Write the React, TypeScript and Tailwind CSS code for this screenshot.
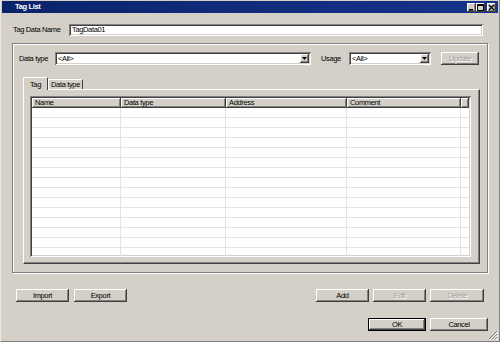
import React from 'react';

const raised =
  'shadow-[inset_-1px_-1px_0_#404040,inset_1px_1px_0_#ffffff,inset_-2px_-2px_0_#808080]';
const sunken =
  'shadow-[inset_1px_1px_0_#808080,inset_-1px_-1px_0_#ffffff,inset_2px_2px_0_#404040,inset_-2px_-2px_0_#d4d0c8]';

function Button({
  label,
  width,
  disabled,
  isDefault,
}: {
  label: string;
  width: string;
  disabled?: boolean;
  isDefault?: boolean;
}) {
  return (
    <div
      className={`${width} h-[13px] flex items-center justify-center bg-[#d4d0c8] ${
        isDefault
          ? 'border border-black shadow-[inset_-1px_-1px_0_#404040,inset_1px_1px_0_#ffffff,inset_-2px_-2px_0_#808080]'
          : raised
      } ${disabled ? 'text-[#a0a0a0] [text-shadow:1px_1px_0_#ffffff]' : 'text-black'}`}
    >
      {label}
    </div>
  );
}

function Combo({ width }: { width: string }) {
  return (
    <div className={`${width} h-[13px] bg-white ${sunken} flex items-center pl-[3px] pr-[2px]`}>
      <span className="flex-1">&lt;All&gt;</span>
      <div className={`w-[9px] h-[9px] bg-[#d4d0c8] ${raised} flex items-center justify-center`}>
        <svg width="5" height="3" viewBox="0 0 5 3">
          <path d="M0 0h5L2.5 3z" fill="#000" />
        </svg>
      </div>
    </div>
  );
}

function TitleButton({ kind }: { kind: 'min' | 'max' | 'close' }) {
  return (
    <div className={`w-[9px] h-[9px] bg-[#d4d0c8] ${raised} flex items-center justify-center`}>
      <svg width="7" height="7" viewBox="0 0 7 7">
        {kind === 'min' && <rect x="1" y="5" width="4" height="1.5" fill="#000" />}
        {kind === 'max' && (
          <path d="M0.5 0.5h6v6h-6z M0.5 1.5h6" stroke="#000" strokeWidth="1" fill="none" />
        )}
        {kind === 'close' && (
          <path d="M1 1l5 5M6 1l-5 5" stroke="#000" strokeWidth="1.3" />
        )}
      </svg>
    </div>
  );
}

const columns = [
  { label: 'Name', w: 'w-[89px]' },
  { label: 'Data type', w: 'w-[105px]' },
  { label: 'Address', w: 'w-[121px]' },
  { label: 'Comment', w: 'w-[114px]' },
];

export default function App() {
  const rows = Array.from({ length: 15 });

  return (
    <div className="w-[500px] h-[342px] bg-[#d4d0c8] font-['Liberation_Sans',sans-serif] text-[7.5px] tracking-[-0.35px] leading-none whitespace-nowrap text-black flex flex-col relative overflow-hidden border-b border-b-[#808080] border-l border-l-[#ece9d8] border-r border-r-[#808080]">
      {/* Title bar */}
      <div className="mx-[1px] mt-[1px] h-[12px] flex items-center bg-gradient-to-r from-[#0a246a] to-[#16338c]">
        <span className="ml-[13px] font-bold text-white">Tag List</span>
        <div className="ml-auto mr-[2px] flex items-center">
          <TitleButton kind="min" />
          <TitleButton kind="max" />
          <div className="w-[2px]" />
          <TitleButton kind="close" />
        </div>
      </div>

      {/* Tag Data Name */}
      <div className="flex items-center mt-[11px] h-[12px]">
        <span className="ml-[12px] w-[56px]">Tag Data Name</span>
        <div className={`w-[414px] h-[12px] bg-white ${sunken} flex items-center pl-[3px]`}>
          TagData01
        </div>
      </div>

      {/* Group box */}
      <div className="ml-[11px] mt-[7px] w-[476px] h-[230px] border border-[#808080] shadow-[1px_1px_0_#ffffff,inset_1px_1px_0_#ffffff] flex flex-col">
        <div className="flex items-center mt-[8px] h-[13px]">
          <span className="ml-[6px] w-[36px]">Data type</span>
          <Combo width="w-[256px]" />
          <span className="ml-[10px] w-[28px]">Usage</span>
          <Combo width="w-[82px]" />
          <div className="ml-[10px]">
            <Button label="Update" width="w-[38px]" disabled />
          </div>
        </div>

        {/* Tabs */}
        <div className="ml-[10px] mt-[12px] flex items-end h-[12px]">
          <div className="relative z-10 w-[25px] h-[13px] -mb-[1px] bg-[#d4d0c8] border-t border-l border-white border-r border-r-[#404040] rounded-t-[1px] flex items-start justify-center pt-[3px]">
            Tag
          </div>
          <div className="w-[35px] h-[10px] bg-[#d4d0c8] border-t border-l border-white border-r border-r-[#404040] flex items-center justify-center">
            Data type
          </div>
        </div>
        <div className="ml-[10px] w-[457px] h-[175px] border-t border-l border-white border-r border-b border-r-[#404040] border-b-[#404040] shadow-[inset_-1px_-1px_0_#808080] flex flex-col">
          <div className={`ml-[6px] mt-[6px] w-[441px] h-[161px] bg-white ${sunken} p-[2px] flex flex-col overflow-hidden`}>
            {/* Header */}
            <div className="flex h-[10px] shrink-0">
              {columns.map((c) => (
                <div
                  key={c.label}
                  className={`${c.w} h-full bg-[#d4d0c8] ${raised} flex items-center pl-[3px]`}
                >
                  {c.label}
                </div>
              ))}
              <div className={`flex-1 h-full bg-[#d4d0c8] ${raised}`} />
            </div>
            {/* Rows */}
            <div className="flex-1 relative">
              {rows.map((_, i) => (
                <div key={i} className="flex h-[10px] border-b border-b-[#e6e4de]">
                  {columns.map((c) => (
                    <div key={c.label} className={`${c.w} h-full border-r border-r-[#e6e4de]`} />
                  ))}
                  <div className="flex-1 h-full" />
                </div>
              ))}
            </div>
          </div>
        </div>
      </div>

      {/* Buttons row 1 */}
      <div className="flex items-center mt-[16px]">
        <div className="ml-[15px]">
          <Button label="Import" width="w-[53px]" />
        </div>
        <div className="ml-[5px]">
          <Button label="Export" width="w-[53px]" />
        </div>
        <div className="ml-auto flex items-center gap-[4px] mr-[15px]">
          <Button label="Add" width="w-[53px]" />
          <Button label="Edit" width="w-[53px]" disabled />
          <Button label="Delete" width="w-[54px]" disabled />
        </div>
      </div>

      {/* Buttons row 2 */}
      <div className="flex items-center justify-end mt-[16px] gap-[4px] mr-[11px]">
        <Button label="OK" width="w-[58px]" isDefault />
        <Button label="Cancel" width="w-[58px]" />
      </div>

      {/* Size grip */}
      <svg className="absolute right-[1px] bottom-[1px]" width="10" height="10" viewBox="0 0 10 10">
        <path d="M9 1L1 9M9 4L4 9M9 7L7 9" stroke="#808080" strokeWidth="1" />
        <path d="M10 2L2 10M10 5L5 10M10 8L8 10" stroke="#ffffff" strokeWidth="1" />
      </svg>
    </div>
  );
}
